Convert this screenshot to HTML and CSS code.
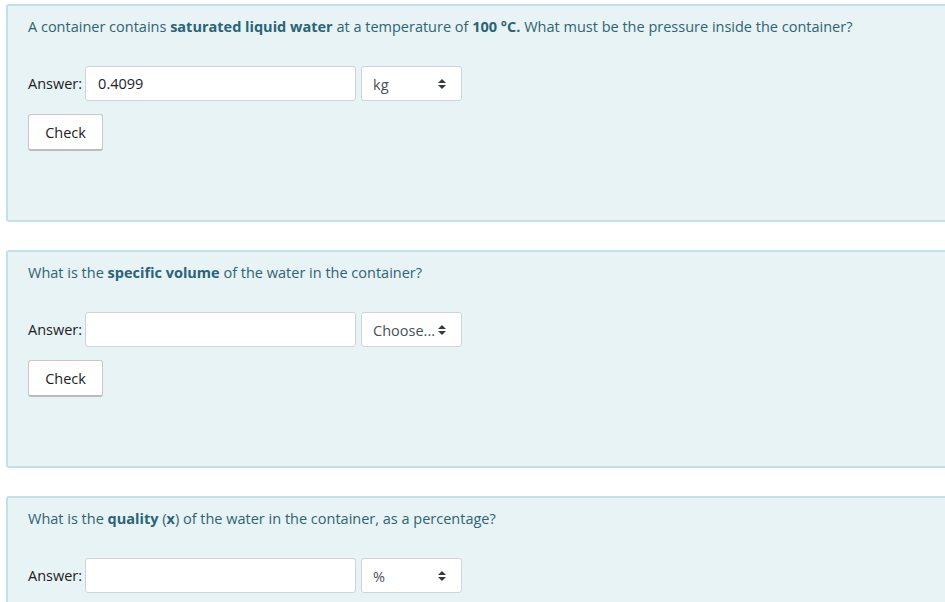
FILE: index.html
```html
<!DOCTYPE html>
<html lang="en">
<head>
    <meta charset="UTF-8">
    <title>Quiz</title>
    <link rel="stylesheet" href="styles.css">
</head>
<body>
    <div class="page">
        <div class="formulation first">
            <div class="qtext">A container contains <b>saturated liquid water</b> at a temperature of <b>100 °C.</b> What must be the pressure inside the container?</div>
            <div class="ablock">
                <label class="lbl">Answer:</label>
                <div class="field">0.4099</div>
                <div class="select">kg<span class="arrows"></span></div>
            </div>
            <button class="check">Check</button>
        </div>
        <div class="formulation">
            <div class="qtext">What is the <b>specific volume</b> of the water in the container?</div>
            <div class="ablock">
                <label class="lbl">Answer:</label>
                <div class="field"></div>
                <div class="select">Choose...<span class="arrows"></span></div>
            </div>
            <button class="check">Check</button>
        </div>
        <div class="formulation">
            <div class="qtext">What is the <b>quality</b> (<b>x</b>) of the water in the container, as a percentage?</div>
            <div class="ablock">
                <label class="lbl">Answer:</label>
                <div class="field"></div>
                <div class="select">%<span class="arrows"></span></div>
            </div>
        </div>
    </div>
</body>
</html>
```

FILE: styles.css
```css
html, body{
    margin: 0;
    overflow: hidden;
}
body{
    font-family: "Open Sans", "Noto Sans", sans-serif;
    font-size: 14.5px;
    color: #1d2125;
    background: #fff;
}
.page{
    width: 960px;
    height: 602px;
    overflow: hidden;
    padding: 4px 0 0 6px;
    box-sizing: border-box;
}
/* question box */
.formulation{
    background-color: #e7f3f5;
    border: 2px solid #c2e1e7;
    border-radius: 3px;
    height: 214px;
    padding: 0 0 0 20px;
    margin-bottom: 28px;
    box-sizing: content-box;
}
.qtext{
    color: #2f6473;
    padding-top: 11px;
    line-height: 20px;
}
.qtext b{
    color: #2a6478;
}
.ablock{
    display: flex;
    align-items: center;
    margin-top: 29px;
}
.lbl{
    margin-right: 3px;
}
.field{
    width: 257px;
    height: 33px;
    border: 1px solid #ced4da;
    border-radius: 3px;
    background: #fff;
    line-height: 33px;
    padding-left: 12px;
    margin-right: 5px;
}
.select{
    position: relative;
    width: 88px;
    height: 33px;
    border: 1px solid #ced4da;
    border-radius: 3px;
    background: #fff;
    line-height: 35px;
    padding-left: 11px;
    color: #495057;
}
/* up/down arrows of the select */
.arrows{
    position: absolute;
    right: 15px;
    top: 12px;
    width: 0;
    height: 0;
    border-left: 4px solid transparent;
    border-right: 4px solid transparent;
    border-bottom: 4px solid #343a40;
}
.arrows::after{
    content: "";
    position: absolute;
    left: -4px;
    top: 6px;
    border-left: 4px solid transparent;
    border-right: 4px solid transparent;
    border-top: 4px solid #343a40;
}
.check{
    margin-top: 13px;
    width: 75px;
    height: 37px;
    font-family: inherit;
    font-size: 14.5px;
    color: #1d2125;
    background: #fff;
    border: 1px solid #c8c8c8;
    border-bottom: 2px solid #bbb;
    border-radius: 3px;
}
```
